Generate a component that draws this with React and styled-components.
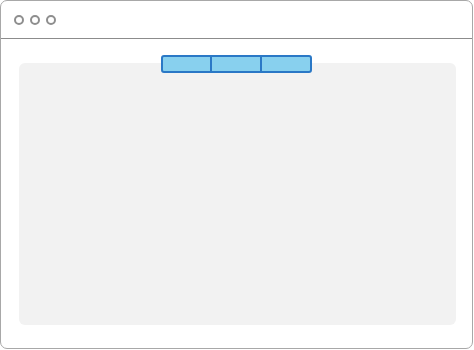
import React from 'react'
import styled, { createGlobalStyle } from 'styled-components'

const GlobalStyle = createGlobalStyle`
  html, body { margin: 0; padding: 0; background: #fff; }
  body { font-family: "Liberation Sans", Arial, sans-serif; }
`

const Window = styled.div`
  box-sizing: border-box;
  width: 473px;
  height: 349px;
  border: 1px solid #a8a8a8;
  border-radius: 7px;
  background: #fff;
  display: flex;
  flex-direction: column;
  overflow: hidden;
`

const TitleBar = styled.div`
  height: 37px;
  border-bottom: 1px solid #8c8c8c;
  display: flex;
  align-items: center;
  gap: 6px;
  padding-left: 13px;
  flex-shrink: 0;
`

const Dot = styled.span`
  box-sizing: border-box;
  width: 10px;
  height: 10px;
  border-radius: 50%;
  border: 2px solid #8e8e8e;
`

const Body = styled.div`
  flex: 1;
  display: flex;
  flex-direction: column;
  align-items: center;
  padding: 16px 16px 23px 18px;
`

const Tabs = styled.div`
  display: flex;
  position: relative;
  z-index: 1;
  margin-left: -2px;
`

const Tab = styled.div`
  box-sizing: border-box;
  width: ${p => p.w}px;
  height: 18px;
  background: #88d0ee;
  border: 2px solid #2a78c6;
  margin-left: ${p => (p.first ? 0 : -2)}px;
  border-radius: ${p => (p.first ? '3px 0 0 3px' : p.last ? '0 3px 3px 0' : '0')};
`

const Panel = styled.div`
  align-self: stretch;
  flex: 1;
  margin-top: -10px;
  background: #f2f2f2;
  border-radius: 6px;
`

export default function App() {
  return (
    <>
      <GlobalStyle />
      <Window>
        <TitleBar>
          <Dot />
          <Dot />
          <Dot />
        </TitleBar>
        <Body>
          <Tabs>
            <Tab first w={51} />
            <Tab w={52} />
            <Tab last w={52} />
          </Tabs>
          <Panel />
        </Body>
      </Window>
    </>
  )
}
